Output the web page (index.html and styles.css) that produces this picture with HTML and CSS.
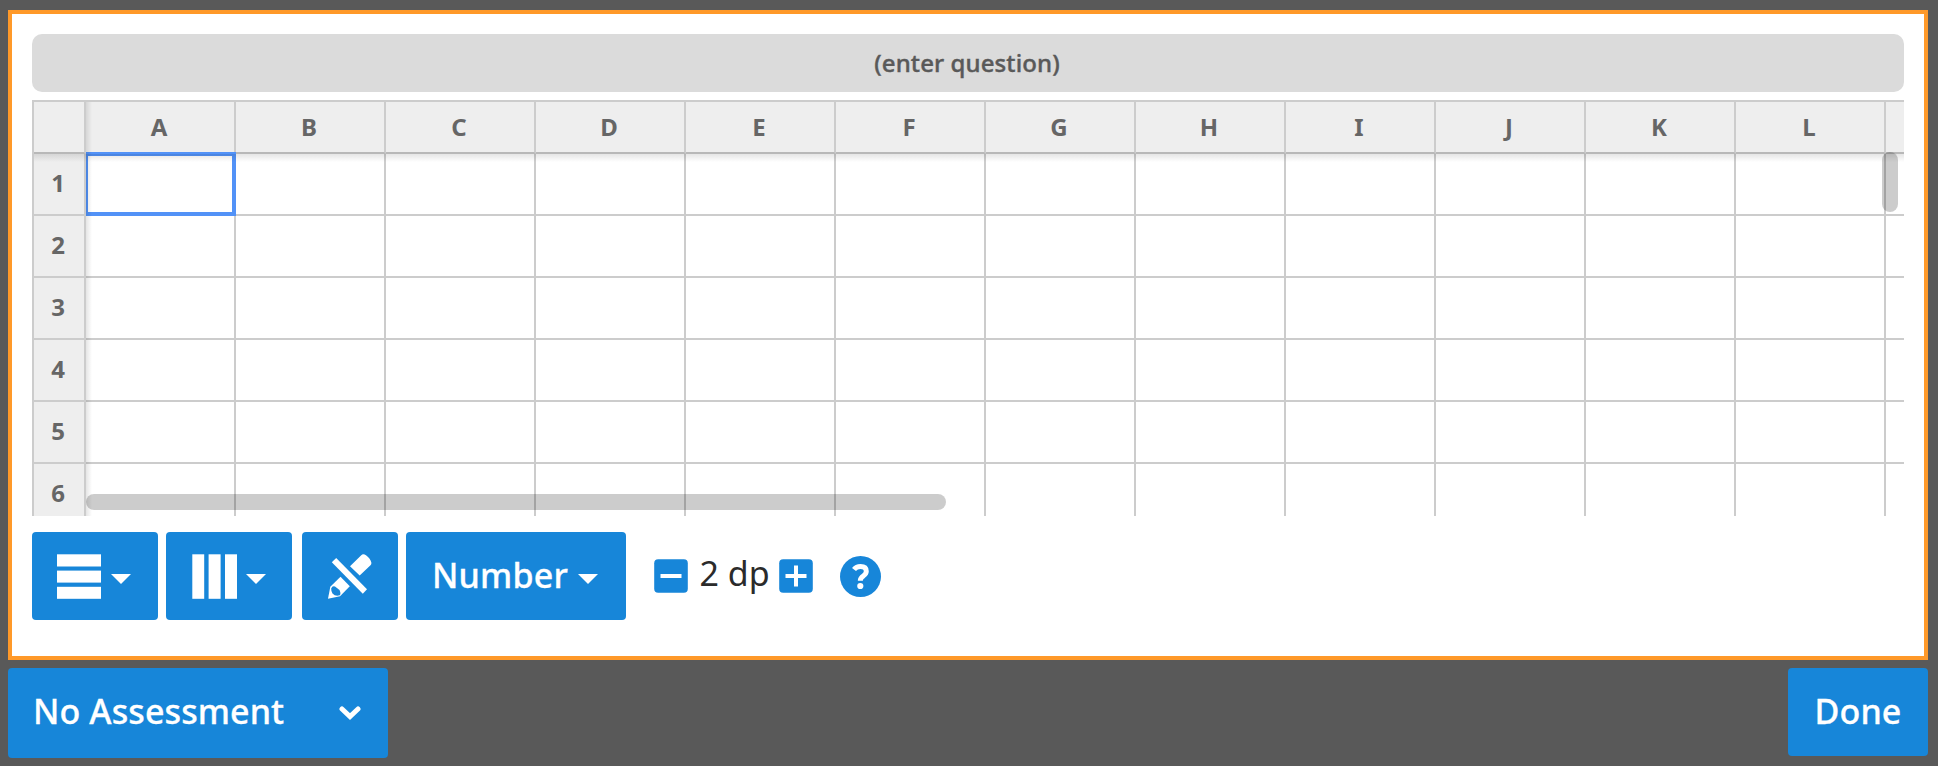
FILE: index.html
```html
<!DOCTYPE html>
<html lang="en">
<head>
    <meta charset="UTF-8">
    <meta name="viewport" content="width=device-width, initial-scale=1.0">
    <title>Spreadsheet Question</title>
    <link rel="stylesheet" href="styles.css">
</head>
<body>
    <div class="editor">
        <div class="question">(enter question)</div>

        <div class="sheet">
            <table class="grid">
                <thead>
                    <tr>
                        <th class="corner"></th>
                        <th>A</th><th>B</th><th>C</th><th>D</th><th>E</th><th>F</th>
                        <th>G</th><th>H</th><th>I</th><th>J</th><th>K</th><th>L</th><th></th>
                    </tr>
                </thead>
                <tbody id="rows"></tbody>
            </table>
            <div class="shadow-top"></div>
            <div class="shadow-left"></div>
            <div class="scroll-x"></div>
            <div class="scroll-y"></div>
        </div>

        <div class="toolbar">
            <button type="button" class="btn btn-rows">
                <svg width="44" height="45" viewBox="0 0 44 45" fill="#fff">
                    <rect y="0.3" width="44" height="12.2"/>
                    <rect y="16.6" width="44" height="12"/>
                    <rect y="32.8" width="44" height="12"/>
                </svg>
                <span class="caret"></span>
            </button>
            <button type="button" class="btn btn-cols">
                <svg width="45" height="45" viewBox="0 0 45 45" fill="#fff">
                    <rect x="0.3" y="0.3" width="11.9" height="44.5"/>
                    <rect x="16.6" y="0.3" width="12" height="44.5"/>
                    <rect x="33" y="0.3" width="12" height="44.5"/>
                </svg>
                <span class="caret"></span>
            </button>
            <button type="button" class="btn btn-clear">
                <svg width="44" height="45" viewBox="0 0 44 45" fill="#fff">
                    <path d="M22 12.3 33 1.5Q35-.6 38 1.2 42.500 4.500 43.400 8.700 43.500 10.300 42.500 11.300L31.700 21.600Z"/>
                    <path d="M12.500 22.800 21.800 32.200 12 42.200 0 44.700 2.300 32.800Z"/>
                    <path d="M3.200 34.500Q4.200 31.500 7 32.500L11.500 36Q13.200 39.500 11.800 41.300 7.500 42.800 4.500 39.500 3 37 3.200 34.500Z" fill="#1786d9"/>
                    <path d="M8.200 4 39 35.300 34.800 39.800 3.800 8.300Z"/>
                </svg>
            </button>
            <button type="button" class="btn btn-format">
                <span>Number</span>
                <span class="caret"></span>
            </button>

            <div class="decimals">
                <svg width="34" height="34" viewBox="0 0 34 34">
                    <rect x="0.2" y="0.2" width="33.600" height="33.600" rx="4" fill="#1786d9"/>
                    <path d="M6.500 17h21" stroke="#fff" stroke-width="4"/>
                </svg>
                <span class="dp">2 dp</span>
                <svg width="34" height="34" viewBox="0 0 34 34">
                    <rect x="0.2" y="0.2" width="33.600" height="33.600" rx="4" fill="#1786d9"/>
                    <path d="M6.500 17h21M17 6.500v21" stroke="#fff" stroke-width="4"/>
                </svg>
            </div>

            <svg class="help" width="41" height="41" viewBox="0 0 41 41">
                <circle cx="20.500" cy="20.500" r="20.500" fill="#1786d9"/>
                <path d="M14 13.500Q16.300 10.500 20.500 10.500 26.300 10.500 26.300 15.300 26.300 17.800 23.500 19.800 20.300 21.800 20.300 24.800" fill="none" stroke="#fff" stroke-width="5"/>
                <circle cx="20.300" cy="30" r="3.100" fill="#fff"/>
            </svg>
        </div>
    </div>

    <div class="footer">
        <button type="button" class="btn assessment">
            <span>No Assessment</span>
            <svg width="22" height="14" viewBox="0 0 22 14">
                <path d="M3 3 11 10.500 19 3" fill="none" stroke="#fff" stroke-width="5" stroke-linecap="round"/>
            </svg>
        </button>
        <button type="button" class="btn done"><span>Done</span></button>
    </div>

    <script>
        const rows = document.getElementById('rows');

        for (let r = 1; r <= 6; r++) {
            const tr = document.createElement('tr');
            tr.innerHTML = `<th>${r}</th>` + '<td></td>'.repeat(13);
            rows.appendChild(tr);
        }

        rows.querySelector('td').className = 'selected';
    </script>
</body>
</html>
```

FILE: styles.css
```css
* {
    margin: 0;
    padding: 0;
    box-sizing: border-box;
}

body {
    font-family: 'Noto Sans', 'Open Sans', sans-serif;
    background: #595959;
    padding: 10px 10px 8px 8px;
    height: 766px;
    overflow: hidden;
}

.editor {
    height: 650px;
    background: #fff;
    border: 4px solid #ff9929;
    padding: 20px;
}

.question {
    height: 58px;
    line-height: 58px;
    margin-bottom: 8px;
    padding-right: 2px;
    border-radius: 10px;
    background: #dbdbdb;
    color: #595959;
    font-size: 24px;
    font-weight: 500;
    letter-spacing: 0.1px;
    -webkit-text-stroke: 0.4px #595959;
    text-align: center;
}

.sheet {
    position: relative;
    height: 416px;
    overflow: hidden;
    border-top: 2px solid #ccc;
    border-left: 2px solid #ccc;
}

.grid {
    width: 2002px;
    table-layout: fixed;
    border-collapse: separate;
    border-spacing: 0;
}

.grid th,
.grid td {
    width: 150px;
    height: 62px;
    border-right: 2px solid #ccc;
    border-bottom: 2px solid #ccc;
}

.grid th {
    padding-right: 2px;
    background: #eee;
    color: #666;
    font-size: 24px;
    font-weight: 700;
    line-height: 30px;
}

.grid tbody th {
    padding-bottom: 2px;
}

.grid thead th {
    height: 52px;
    border-bottom-color: #b8b8b8;
}

.grid thead .corner,
.grid tbody th {
    width: 52px;
}

.grid .selected {
    position: relative;
}

.selected::after {
    content: '';
    position: absolute;
    top: -2px;
    right: -2px;
    bottom: -2px;
    left: 0;
    border: 4px solid #5292f7;
    border-left-width: 2px;
}

.shadow-top,
.shadow-left {
    position: absolute;
    pointer-events: none;
}

.shadow-top {
    top: 52px;
    left: 0;
    right: 0;
    height: 8px;
    background: linear-gradient(rgba(0, 0, 0, 0.1), rgba(0, 0, 0, 0));
}

.shadow-left {
    top: 0;
    bottom: 0;
    left: 52px;
    width: 6px;
    background: linear-gradient(to right, rgba(0, 0, 0, 0.1), rgba(0, 0, 0, 0));
}

.scroll-x,
.scroll-y {
    position: absolute;
    border-radius: 8px;
    background: rgba(0, 0, 0, 0.2);
}

.scroll-x {
    left: 52px;
    bottom: 6px;
    width: 860px;
    height: 16px;
}

.scroll-y {
    top: 50px;
    right: 6px;
    width: 16px;
    height: 60px;
}

.toolbar {
    display: flex;
    align-items: center;
    margin-top: 16px;
    height: 88px;
}

.btn {
    display: flex;
    align-items: center;
    height: 88px;
    border: none;
    border-radius: 4px;
    background: #1786d9;
    color: #fff;
    font-family: inherit;
    font-size: 34px;
    font-weight: 500;
    letter-spacing: 0.1px;
    -webkit-text-stroke: 0.3px #fff;
    cursor: pointer;
}

.caret {
    border: 10px solid transparent;
    border-top-color: #fff;
    border-bottom: none;
    margin-top: 6px;
}

.btn-rows {
    width: 126px;
    padding-left: 25px;
    gap: 10px;
    margin-right: 8px;
}

.btn-cols {
    width: 126px;
    padding-left: 26px;
    gap: 9px;
    margin-right: 10px;
}

.btn-clear {
    width: 96px;
    padding-left: 26px;
    margin-right: 8px;
}

.btn-format {
    width: 220px;
    padding-left: 26px;
    gap: 10px;
}

.btn-format span:first-child {
    margin-bottom: 2px;
    letter-spacing: 0.2px;
}

.decimals {
    display: flex;
    align-items: center;
    margin-left: 28px;
}

.dp {
    width: 91px;
    padding-left: 2px;
    text-align: center;
    color: #2b2b2b;
    font-size: 34px;
    line-height: 40px;
    margin-top: -6px;
}

.help {
    margin-left: 27px;
}

.footer {
    display: flex;
    justify-content: space-between;
    align-items: flex-start;
    margin-top: 8px;
}

.assessment {
    width: 380px;
    height: 90px;
    padding: 0 27px 0 25px;
    justify-content: space-between;
}

.assessment span {
    margin-bottom: 4px;
}

.done {
    width: 140px;
    justify-content: center;
}

.done span {
    margin-bottom: 2px;
}
```
